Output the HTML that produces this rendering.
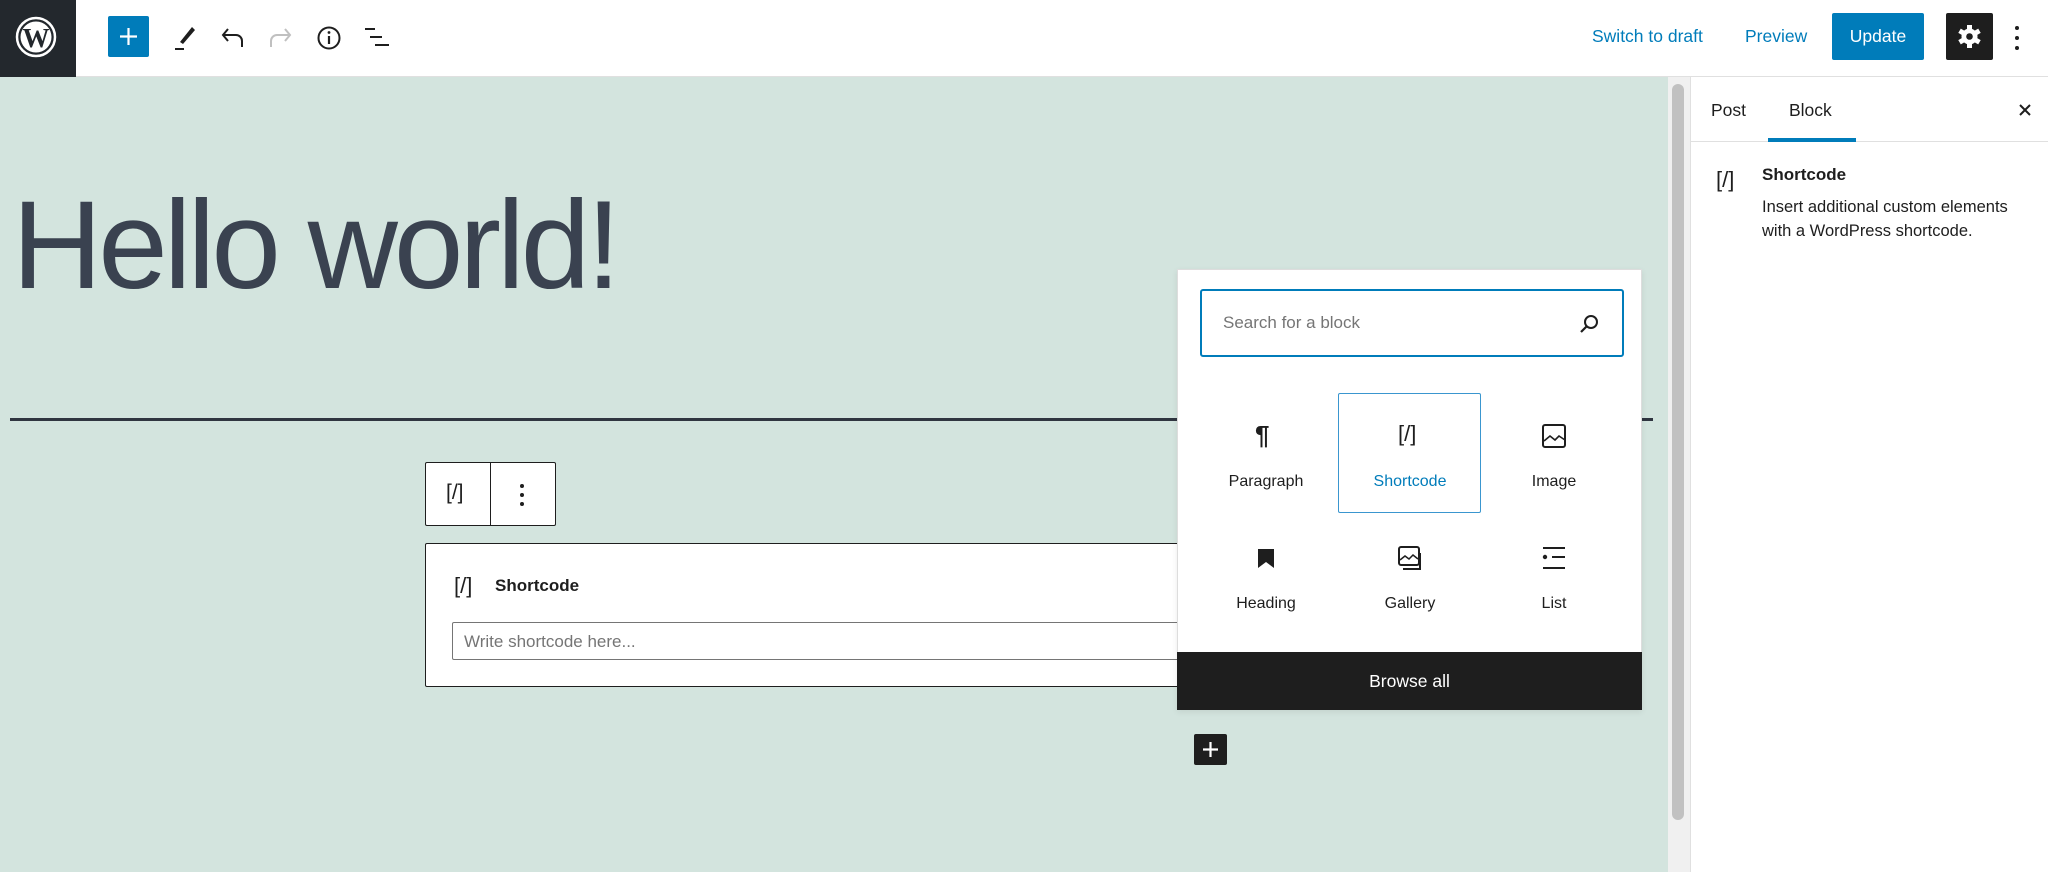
<!DOCTYPE html>
<html><head><meta charset="utf-8"><style>
*{box-sizing:border-box;margin:0;padding:0}
body{width:2048px;height:872px;overflow:hidden;background:#d3e4de;font-family:"Liberation Sans",Arial,sans-serif;position:relative;color:#1e1e1e}
.abs{position:absolute}
.hdr{left:0;top:0;width:2048px;height:77px;background:#fff;border-bottom:1px solid #e0e0e0}
.logo{left:0;top:0;width:76px;height:77px;background:#23282d}
.ic{position:absolute}
.lbl{position:absolute;font-size:16px;text-align:center;width:140px}
</style></head><body>
<div class="abs hdr"></div>
<div class="abs logo"><svg width="76" height="77" viewBox="0 0 76 77"><circle cx="36" cy="37" r="19" fill="none" stroke="#fff" stroke-width="2.5"/><circle cx="36" cy="37" r="15.5" fill="#fff"/><text x="36" y="47" text-anchor="middle" font-family="Liberation Serif,serif" font-weight="bold" font-size="27" fill="#23282d">W</text></svg></div>
<div class="abs" style="left:108px;top:16px;width:41px;height:41px;background:#007cba;border-radius:2px"><svg width="41" height="41"><path d="M20.5 12v17M12 20.5h17" stroke="#fff" stroke-width="2.2"/></svg></div>
<svg class="ic" style="left:172px;top:24px" width="26" height="28"><path d="M8 18 L20 3 L23 6 L11 20 Z" fill="#1e1e1e"/><path d="M3 25h9" stroke="#1e1e1e" stroke-width="2"/></svg>
<svg class="ic" style="left:220px;top:26px" width="26" height="24"><path d="M3 9h13a6 6 0 0 1 6 6v6M8 3L3 9l5 6" fill="none" stroke="#1e1e1e" stroke-width="2"/></svg>
<svg class="ic" style="left:267px;top:26px" width="26" height="24"><path d="M23 9H10a6 6 0 0 0-6 6v6M18 3l5 6-5 6" fill="none" stroke="#c0c0c0" stroke-width="2"/></svg>
<svg class="ic" style="left:316px;top:25px" width="26" height="26"><circle cx="13" cy="13" r="10.5" fill="none" stroke="#1e1e1e" stroke-width="2"/><path d="M13 11v8" stroke="#1e1e1e" stroke-width="2.2"/><circle cx="13" cy="7.5" r="1.4" fill="#1e1e1e"/></svg>
<svg class="ic" style="left:363px;top:26px" width="28" height="24"><path d="M2 3h10M7 11h12M12 19h14" stroke="#1e1e1e" stroke-width="2"/></svg>
<div class="abs" style="left:1592px;top:26px;font-size:17.5px;color:#007cba">Switch to draft</div>
<div class="abs" style="left:1745px;top:26px;font-size:17.5px;color:#007cba">Preview</div>
<div class="abs" style="left:1832px;top:13px;width:92px;height:47px;background:#007cba;border-radius:2px;color:#fff;font-size:17.5px;line-height:47px;text-align:center">Update</div>
<div class="abs" style="left:1946px;top:13px;width:47px;height:47px;background:#1e1e1e;border-radius:2px"><svg width="47" height="47" viewBox="0 0 47 47"><g transform="translate(23.5 23.5)" fill="#fff"><circle r="8"/><rect x="-2.5" y="-11.5" width="5" height="23"/><rect x="-2.5" y="-11.5" width="5" height="23" transform="rotate(60)"/><rect x="-2.5" y="-11.5" width="5" height="23" transform="rotate(120)"/></g><circle cx="23.5" cy="23.5" r="3.3" fill="#1e1e1e"/></svg></div>
<svg class="ic" style="left:2012px;top:24px" width="10" height="28"><circle cx="5" cy="4" r="2" fill="#1e1e1e"/><circle cx="5" cy="14" r="2" fill="#1e1e1e"/><circle cx="5" cy="24" r="2" fill="#1e1e1e"/></svg>

<div class="abs" style="left:12px;top:183px;font-size:125px;letter-spacing:-4px;color:#3a4250;line-height:1">Hello world!</div>
<div class="abs" style="left:10px;top:418px;width:1643px;height:3px;background:#2f3540"></div>

<div class="abs" style="left:425px;top:462px;width:131px;height:64px;background:#fff;border:1px solid #1e1e1e;border-radius:2px"></div>
<div class="abs" style="left:490px;top:462px;width:1px;height:64px;background:#1e1e1e"></div>
<div class="abs" style="left:446px;top:481px;font-size:21px">[/]</div>
<svg class="ic" style="left:518px;top:482px" width="8" height="26"><circle cx="4" cy="4" r="2" fill="#1e1e1e"/><circle cx="4" cy="13" r="2" fill="#1e1e1e"/><circle cx="4" cy="22" r="2" fill="#1e1e1e"/></svg>

<div class="abs" style="left:425px;top:543px;width:800px;height:144px;background:#fff;border:1px solid #1e1e1e;border-radius:2px"></div>
<div class="abs" style="left:454px;top:573px;font-size:22px">[/]</div>
<div class="abs" style="left:495px;top:576px;font-size:17px;font-weight:bold">Shortcode</div>
<div class="abs" style="left:452px;top:622px;width:780px;height:38px;border:1px solid #757575;border-radius:2px;background:#fff"></div>
<div class="abs" style="left:464px;top:632px;font-size:17px;color:#757575">Write shortcode here...</div>

<div class="abs" style="left:1177px;top:269px;width:465px;height:441px;background:#fff;border:1px solid #ddd;box-shadow:0 2px 6px rgba(0,0,0,.08)"></div>
<div class="abs" style="left:1200px;top:289px;width:424px;height:68px;border:2px solid #007cba;border-radius:3px"></div>
<div class="abs" style="left:1223px;top:313px;font-size:17px;color:#757575">Search for a block</div>
<svg class="ic" style="left:1577px;top:312px" width="24" height="24"><circle cx="14" cy="10" r="6" fill="none" stroke="#1e1e1e" stroke-width="2"/><path d="M10 14L4 20" stroke="#1e1e1e" stroke-width="2.2"/></svg>
<div class="abs" style="left:1338px;top:393px;width:143px;height:120px;border:1.5px solid #3a96cf;border-radius:2px"></div>
<div class="abs" style="left:1255px;top:420px;font-size:26px;font-weight:bold">¶</div>
<div class="abs" style="left:1398px;top:421px;font-size:22px">[/]</div>
<svg class="ic" style="left:1541px;top:423px" width="26" height="26"><rect x="2" y="2" width="22" height="22" rx="2" fill="none" stroke="#1e1e1e" stroke-width="2"/><path d="M3 18l6-5 5 4 4-4 6 4" fill="none" stroke="#1e1e1e" stroke-width="1.6"/></svg>
<div class="lbl" style="left:1196px;top:473px">Paragraph</div>
<div class="lbl" style="left:1340px;top:473px;color:#007cba">Shortcode</div>
<div class="lbl" style="left:1484px;top:473px">Image</div>
<svg class="ic" style="left:1256px;top:547px" width="20" height="22"><path d="M2 2h16v19l-8-6-8 6z" fill="#1e1e1e"/></svg>
<svg class="ic" style="left:1397px;top:545px" width="28" height="28"><rect x="2" y="2" width="20" height="18" rx="2" fill="none" stroke="#1e1e1e" stroke-width="2"/><path d="M3 15l5-4 4 3 4-4 5 4" fill="none" stroke="#1e1e1e" stroke-width="1.5"/><path d="M6 24h17V8" fill="none" stroke="#1e1e1e" stroke-width="2"/></svg>
<svg class="ic" style="left:1541px;top:545px" width="26" height="26"><path d="M2 3h22M11 12h13M2 23h22" stroke="#1e1e1e" stroke-width="2"/><circle cx="4" cy="12" r="2.2" fill="#1e1e1e"/></svg>
<div class="lbl" style="left:1196px;top:595px">Heading</div>
<div class="lbl" style="left:1340px;top:595px">Gallery</div>
<div class="lbl" style="left:1484px;top:595px">List</div>
<div class="abs" style="left:1177px;top:652px;width:465px;height:58px;background:#1e1e1e;color:#fff;font-size:17.5px;line-height:58px;text-align:center">Browse all</div>
<div class="abs" style="left:1194px;top:734px;width:33px;height:31px;background:#1e1e1e;border-radius:2px"><svg width="33" height="31"><path d="M16.5 8v15M9 15.5h15" stroke="#fff" stroke-width="2.2"/></svg></div>

<div class="abs" style="left:1668px;top:77px;width:22px;height:795px;background:#f0f0f0"></div>
<div class="abs" style="left:1672px;top:84px;width:12px;height:736px;background:#c1c1c1;border-radius:6px"></div>
<div class="abs" style="left:1690px;top:77px;width:358px;height:795px;background:#fff;border-left:1px solid #e0e0e0"></div>
<div class="abs" style="left:1690px;top:141px;width:358px;height:1px;background:#e0e0e0"></div>
<div class="abs" style="left:1711px;top:100px;font-size:17.5px">Post</div>
<div class="abs" style="left:1789px;top:100px;font-size:17.5px">Block</div>
<div class="abs" style="left:1768px;top:138px;width:88px;height:4px;background:#007cba"></div>
<svg class="ic" style="left:2018px;top:103px" width="14" height="14"><path d="M2 2l10 10M12 2L2 12" stroke="#1e1e1e" stroke-width="2"/></svg>
<div class="abs" style="left:1716px;top:167px;font-size:22px">[/]</div>
<div class="abs" style="left:1762px;top:165px;font-size:17px;font-weight:bold">Shortcode</div>
<div class="abs" style="left:1762px;top:195px;font-size:16.5px;line-height:24px;color:#1e1e1e">Insert additional custom elements<br>with a WordPress shortcode.</div>
</body></html>
